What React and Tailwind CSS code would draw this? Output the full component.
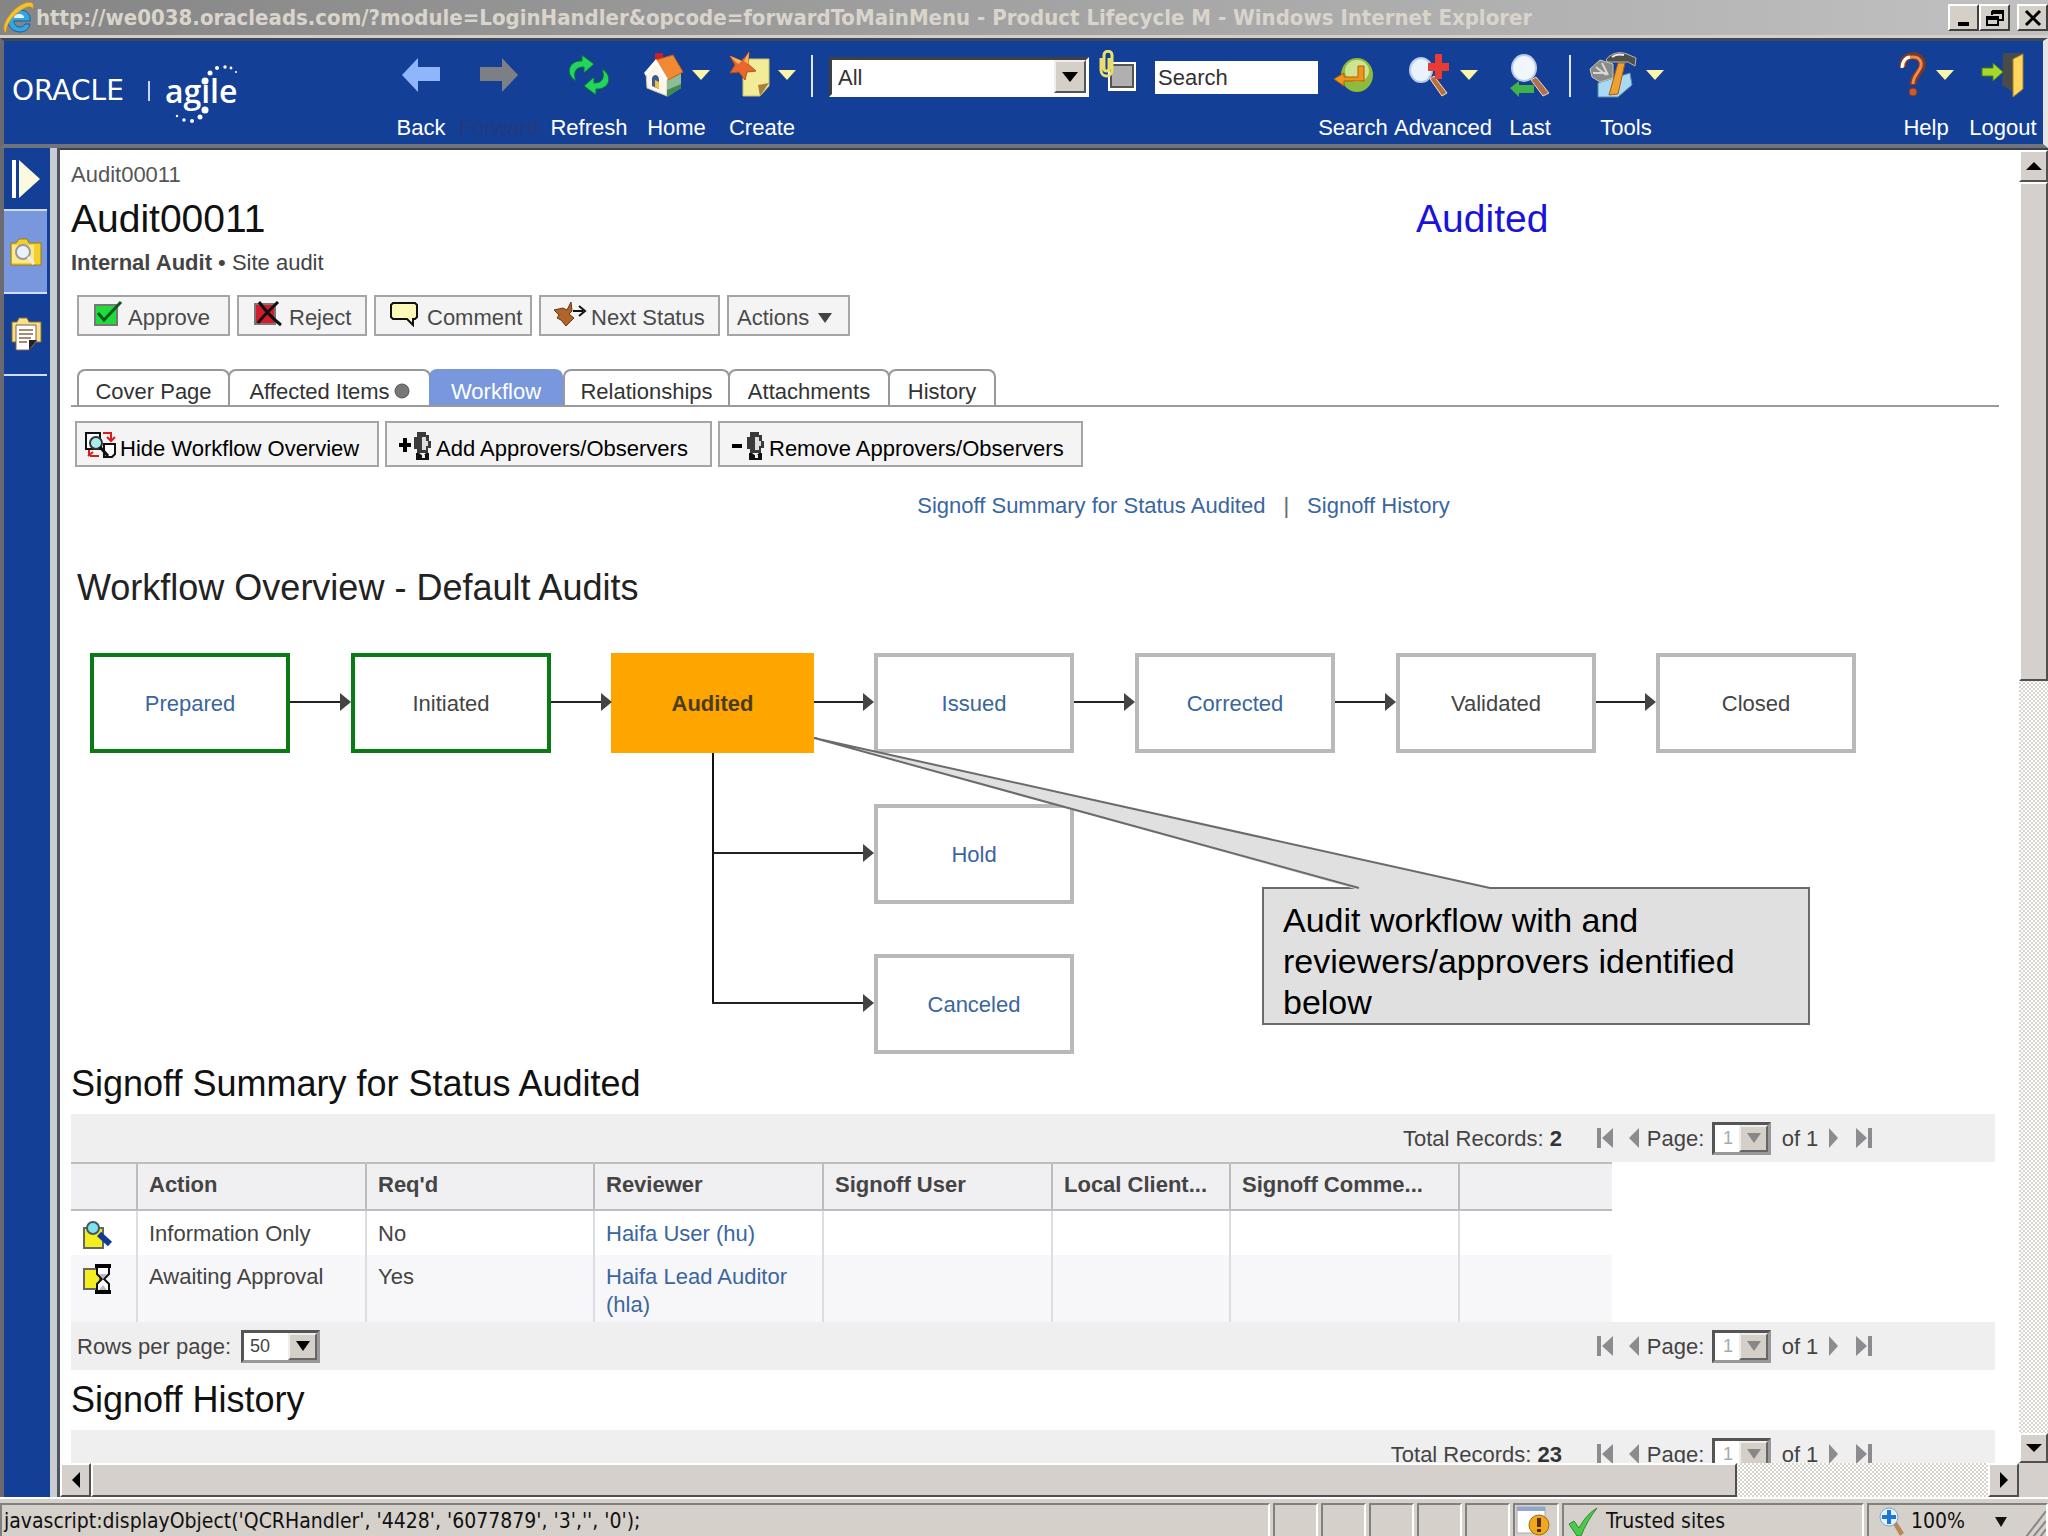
const FONT = "font-['Liberation_Sans',Arial,sans-serif]";
const TAHOMA = "font-['DejaVu_Sans_Condensed','Noto_Sans',sans-serif]";

function Svg({ w, h, children, className = "" }) {
  return (
    <svg width={w} height={h} viewBox={`0 0 ${w} ${h}`} aria-hidden="true" className={`shrink-0 ${className}`}>
      {children}
    </svg>
  );
}

/* ---------- icons ---------- */

const IeIcon = () => (
  <Svg w={36} h={36}>
    <path d="M30 21H14c0 4 3 6 6 6 2 0 4-1 5-3h5c-1 5-5 8-10 8-7 0-12-5-12-11S13 10 20 10s11 5 10 11z" fill="#35a6e0" stroke="#0f5fa0" strokeWidth="1" />
    <path d="M14 18h10c0-3-2-4-5-4s-5 1-5 4z" fill="#dff3fb" />
    <path d="M6 33C1 30 5 19 13 11S31 0 33 4c1 2 0 4-1 6 1-5-5-4-12 1S6 24 6 33z" fill="#f2c230" stroke="#b98a10" strokeWidth=".6" />
  </Svg>
);

const ArrowIcon = ({ fill, flip }) => (
  <Svg w={38} h={36}>
    <path transform={flip ? "matrix(-1 0 0 1 38 0)" : undefined} d="M0 18 16 1v9h22v14H16v11z" fill={fill} />
  </Svg>
);

const RefreshIcon = () => (
  <Svg w={42} h={40}>
    <path d="M8 26C-4 19 1 5 14 6V0l12 9-10 9v-6c-9 0-11 6-8 14z" fill="#22d65a" stroke="#0b6b3c" strokeWidth="1" />
    <path d="M34 14c12 7 7 21-6 20v6l-12-9 10-9v6c9 0 11-6 8-14z" fill="#22d65a" stroke="#0b6b3c" strokeWidth="1" />
  </Svg>
);

const HomeIcon = () => (
  <Svg w={40} h={46}>
    <path d="M11 1h8v10h-8z" fill="#c8202a" />
    <path d="M2 20 12 9l11 16v19L3 36z" fill="#fbf6ea" stroke="#cfc7b8" />
    <path d="M23 27 37 20v16L23 45z" fill="#8dbd94" />
    <path d="m23 38 14-6v4L23 45z" fill="#3f8a4c" />
    <path d="M12 8 29 3l10 17-15 8z" fill="#f28a33" stroke="#c75a12" />
    <path d="m12 7 12 20-3 2L11 12 2 24l-2-3z" fill="#fff" />
    <path d="M8 34v-8c2-5 7-3 7 2v9z" fill="#3e5b8c" />
    <path d="M11 35v-7l4 2v7z" fill="#f0c040" />
  </Svg>
);

const CreateIcon = () => (
  <Svg w={42} h={46}>
    <path d="M15 7h26v27l-9 10H15z" fill="#f3ec96" stroke="#c9c068" />
    <path d="M41 31 30 33l2 11z" fill="#a8803c" />
    <path d="m2 4 12 5 7-9-1 12 8 7-9 1-2 8-6-8-9 1 5-8z" fill="#e8672c" stroke="#b8530f" />
    <path d="m2 4 12 5-4 3zM21 0l-1 12-4-3z" fill="#f7b45c" />
  </Svg>
);

const Caret = ({ color = "#fbf6a8", w = 18 }) => (
  <Svg w={w} h={10}>
    <path d={`M0 0h${w}l-${w / 2} 10z`} fill={color} />
  </Svg>
);

const ClipIcon = () => (
  <Svg w={40} h={42}>
    <rect x="10" y="12" width="28" height="29" fill="#fff" />
    <rect x="13" y="15" width="22" height="22" fill="#b0b0b0" stroke="#555" strokeWidth="2" />
    <path d="M3 8v12c0 8 11 8 11 0V5c0-5-8-5-8 0v13c0 4 5 4 5 0V8" fill="none" stroke="#e9df6a" strokeWidth="3" />
  </Svg>
);

const GoIcon = () => (
  <Svg w={42} h={36}>
    <ellipse cx="25" cy="18" rx="16" ry="17" fill="#8fbb3c" />
    <ellipse cx="25" cy="14" rx="12" ry="11" fill="#cfe493" />
    <path d="M26 9h6v15H12v5L2 22l10-6v4h14z" fill="#ee961c" stroke="#b05f05" />
  </Svg>
);

const AdvancedIcon = () => (
  <Svg w={44} h={44}>
    <path d="m22 26 4-3 13 17-5 3z" fill="#b8703c" stroke="#fbe0c0" strokeWidth="1" />
    <ellipse cx="13" cy="17" rx="11" ry="12" fill="#eaf3fb" stroke="#b5cbe6" strokeWidth="2" />
    <path d="M27 1h7v9h7v8h-7v8h-7v-8h-7v-8h7z" fill="#e63c34" />
  </Svg>
);

const LastIcon = () => (
  <Svg w={44} h={44}>
    <path d="m23 27 5-3 13 16-6 3z" fill="#b0704c" stroke="#f4d8c0" strokeWidth="1" />
    <ellipse cx="16" cy="15" rx="12" ry="13" fill="#f0f6fb" stroke="#b5cbe6" strokeWidth="2" />
    <path d="m2 35 9-7v4h15v8H11v4z" fill="#3fb34a" />
  </Svg>
);

const ToolsIcon = () => (
  <Svg w={50} h={48}>
    <path d="m10 32 32-10 2 12-14 12H10z" fill="#a9daf4" stroke="#5c86a4" />
    <path d="M2 18 12 9l13 4v14l-13 4-8-5z" fill="#8a8a86" stroke="#c8c8c0" />
    <path d="m8 16 10 8M14 12l6 12M5 22h14" stroke="#d8d8d8" strokeWidth="2" />
    <path d="M30 12h7l-7 31-9 1z" fill="#f0a030" stroke="#a4600c" />
    <path d="M18 9c4-7 14-9 21-6l9 4-1 8-7-4H20z" fill="#4c504b" stroke="#b9b9ac" />
    <path d="M24 6c4-3 8-3 12-2" fill="none" stroke="#eee" strokeWidth="2" />
  </Svg>
);

const HelpIcon = () => (
  <Svg w={30} h={46}>
    <path d="M5 15C4 7 9 4 15 4c7 0 10 5 9 10-1 6-9 9-9 19" fill="none" stroke="#84381a" strokeWidth="7" />
    <path d="M5 15C5 8 9 5 15 5c6 0 9 4 8 9-1 6-8 9-8 18" fill="none" stroke="#ee8a54" strokeWidth="3" />
    <path d="M4 16C4 9 8 5 12 5" fill="none" stroke="#fff" strokeWidth="3" />
    <circle cx="15" cy="40" r="4" fill="#c85a2c" stroke="#84381a" />
  </Svg>
);

const LogoutIcon = () => (
  <Svg w={44} h={48}>
    <path d="M22 2h20v34l-10 5-11-7z" fill="#494b49" />
    <path d="M32 8 42 3v35l-10 8z" fill="#ffd75e" stroke="#a4801c" />
    <path d="M1 17h11v-5l10 9-10 9v-5H1z" fill="#a5d82c" stroke="#4f7d10" />
  </Svg>
);

const ApproveIcon = () => (
  <Svg w={30} h={26}>
    <rect x="2" y="4" width="22" height="20" fill="#1fdc3c" stroke="#777" strokeWidth="2" />
    <path d="m5 12 6 7L28 1" fill="none" stroke="#0a5c1c" strokeWidth="3" />
  </Svg>
);
const RejectIcon = () => (
  <Svg w={30} h={26}>
    <rect x="2" y="3" width="20" height="20" fill="#d41c2c" stroke="#777" strokeWidth="2" />
    <path d="M6 1c6 8 14 17 22 23M25 1C18 8 10 15 5 22" fill="none" stroke="#111" strokeWidth="3" />
  </Svg>
);
const CommentIcon = () => (
  <Svg w={30} h={26}>
    <path d="M4 2h22l2 2v12l-2 2h-2v6l-6-6H4l-2-2V4z" fill="#fdf9b8" stroke="#111" strokeWidth="2" />
  </Svg>
);
const NextIcon = () => (
  <Svg w={34} h={26}>
    <path d="m1 9 9-2 4 2 4-8 1 9-3 3 5 4-8 8-5-6-4-2 2-3z" fill="#b0642c" stroke="#6c3410" />
    <path d="M20 10h10M26 5l6 5-6 5" fill="none" stroke="#111" strokeWidth="2" />
  </Svg>
);
const HideIcon = () => (
  <Svg w={34} h={28}>
    <path d="M3 2h14v16H3zM21 13h11v10l-3 3h-8z" fill="#fff" stroke="#111" strokeWidth="2" />
    <circle cx="13" cy="12" r="6" fill="#a8eef0" stroke="#333" strokeWidth="2" />
    <path d="m17 16 8 9" stroke="#111" strokeWidth="3" />
    <path d="M20 2h8v7M24 6l4 4 4-4M16 25H7M10 21l-5 4M6 19v6" fill="none" stroke="#d81c1c" strokeWidth="2" />
  </Svg>
);
const PersonIcon = ({ sign }) => (
  <Svg w={34} h={30}>
    {sign === "+" ? <path d="M1 12h4V7h4v5h4v4H9v5H5v-5H1z" fill="#000" /> : <path d="M1 13h10v4H1z" fill="#000" />}
    <path d="M19 1h9v3h3v6h2v7h-3v5H19v-4h-3V6h3z" fill="#3a3a3a" />
    <path d="M24 6h4v4h2v5h-2v4h-4z" fill="#ddd" />
    <path d="M18 22h3l4 3 3-3h3v7H18z" fill="#111" />
    <path d="M24 24h3v3h-3z" fill="#eee" />
  </Svg>
);

const FolderSearchIcon = () => (
  <Svg w={32} h={30}>
    <path d="M1 6h5l3-4h8l2 4h12v22H1z" fill="#f4cf2c" stroke="#a07c08" />
    <path d="M2 8h22v18H2z" fill="#fbe98c" />
    <circle cx="13" cy="15" r="7" fill="#e8f2f8" stroke="#999" strokeWidth="2" />
    <path d="m18 20 6 7" stroke="#eee" strokeWidth="3" />
  </Svg>
);
const NotesIcon = () => (
  <Svg w={32} h={34}>
    <path d="M2 5h5l2-4h8l2 4h12v20H2z" fill="#f6e08c" stroke="#94701c" />
    <path d="M6 8h20v17l-7 8H6z" fill="#fff" stroke="#84603c" />
    <path d="M9 13h14M9 17h14M9 21h12M9 25h8" stroke="#a88a70" strokeWidth="2" />
    <path d="M27 23h-8v10z" fill="#222" />
  </Svg>
);
const InfoRowIcon = () => (
  <Svg w={32} h={30}>
    <path d="M2 8h19v20H2z" fill="#f4ee20" stroke="#666" strokeWidth="2" />
    <path d="m17 14 11 10" stroke="#123a94" strokeWidth="6" />
    <circle cx="11" cy="8" r="6" fill="#7fe4ea" stroke="#456" strokeWidth="2" />
  </Svg>
);
const WaitRowIcon = () => (
  <Svg w={32} h={32}>
    <path d="M2 6h16v20H2z" fill="#f4ee20" stroke="#666" strokeWidth="2" />
    <path d="M15 4v7l5 5-5 5v7h12v-7l-5-5 5-5V4z" fill="#fff" stroke="#111" strokeWidth="2" />
    <path d="M17 11h8l-4 5zM17 27l4-5 4 5z" fill="#bbb" />
    <path d="M13 1h16v4H13zM13 27h16v4H13z" fill="#000" />
  </Svg>
);

/* ---------- toolbar ---------- */

function ToolButton({ label, icon, caret, className = "", labelClass = "text-white" }) {
  return (
    <button type="button" className={`flex flex-col items-center ${className}`}>
      <span className="flex h-[72px] items-center gap-2 pb-1">
        {icon}
        {caret && <Caret />}
      </span>
      <span className={`text-[22px] leading-[32px] ${labelClass}`}>{label}</span>
    </button>
  );
}

const Separator = () => <div className="mt-[14px] h-[42px] w-[2px] bg-[#dfe6f6]" />;

function WinButton({ label, children }) {
  return (
    <button type="button" aria-label={label} className="flex h-[27px] w-[31px] items-center justify-center border-2 border-t-white border-l-white border-r-[#404040] border-b-[#404040] bg-[#d4d0c8]">
      {children}
    </button>
  );
}

function TitleBar() {
  return (
    <div className="flex h-[38px] shrink-0 items-center border-b-[3px] border-[#d4d0c8] bg-linear-to-r from-[#858585] to-[#c2c1c1]">
      <div className="flex min-w-0 flex-1 items-center">
        <IeIcon />
        <h1 className={`truncate text-[22px] leading-[34px] font-bold text-[#d9d5cc] ${TAHOMA}`}>
          http://we0038.oracleads.com/?module=LoginHandler&amp;opcode=forwardToMainMenu - Product Lifecycle M - Windows Internet Explorer
        </h1>
      </div>
      <div className="flex">
        <WinButton label="Minimize"><Svg w={20} h={18}><path d="M4 13h11v4H4z" /></Svg></WinButton>
        <WinButton label="Restore">
          <Svg w={20} h={20}><path d="M7 3h11v9h-4M7 3v4M7 5h11M2 9h11v8H2zM2 11h11" fill="none" stroke="#000" strokeWidth="2" /></Svg>
        </WinButton>
        <div className="w-[7px]" />
        <WinButton label="Close"><Svg w={20} h={18}><path d="m3 2 14 14M17 2 3 16" stroke="#000" strokeWidth="3" /></Svg></WinButton>
      </div>
    </div>
  );
}

function Logo() {
  return (
    <div className="flex w-[386px] items-center pb-1 pl-2 text-white">
      <span className="font-['DejaVu_Sans',sans-serif] text-[28px] leading-[40px]">ORACLE</span>
      <span className="ml-[24px] h-[20px] w-[2px] bg-[#c8d4f0]" />
      <span className="relative ml-[15px] font-['Open_Sans',sans-serif] text-[32px] leading-[60px] font-semibold">
        agile
        <svg width="78" height="88" viewBox="0 0 78 88" className="absolute -top-[14px] left-0" aria-hidden="true">
          <g fill="#fff">
            <circle cx="40" cy="34" r="3.5" />
            <circle cx="45" cy="26" r="2.5" />
            <circle cx="52" cy="21" r="2" />
            <circle cx="60" cy="20" r="1.7" />
            <circle cx="66" cy="21" r="1.4" />
            <circle cx="71" cy="25" r="1.1" />
            <circle cx="40" cy="63" r="3.5" />
            <circle cx="35" cy="70" r="2.5" />
            <circle cx="27" cy="74" r="2" />
            <circle cx="19" cy="73" r="1.7" />
            <circle cx="12" cy="69" r="1.2" />
          </g>
        </svg>
      </span>
    </div>
  );
}

function Header() {
  return (
    <header className="flex h-[110px] shrink-0 border-t-[3px] border-r-[5px] border-b-4 border-l-4 border-t-[#404858] border-r-[#e8e6e2] border-b-[#6f747c] border-l-[#6a6a70] bg-[#143f97]">
      <Logo />
      <ToolButton className="-ml-1 w-[70px]" label="Back" icon={<ArrowIcon fill="#8fb6fa" />} />
      <ToolButton className="w-[86px]" label="Forward" labelClass="text-[#24397a]" icon={<ArrowIcon fill="#7d7f86" flip />} />
      <ToolButton className="w-[94px]" label="Refresh" icon={<RefreshIcon />} />
      <ToolButton className="w-[81px]" label="Home" icon={<HomeIcon />} caret />
      <ToolButton className="w-[90px]" label="Create" icon={<CreateIcon />} caret />
      <div className="ml-[4px]"><Separator /></div>
      <div className="relative mt-[16px] ml-[16px] h-[40px] w-[260px] border-[3px] border-t-[#404040] border-r-white border-b-white border-l-[#404040] bg-white">
        <select aria-label="Search scope" className="h-full w-full appearance-none bg-white pl-[6px] text-[22px] text-[#333]" defaultValue="All">
          <option>All</option>
        </select>
        <span className="pointer-events-none absolute top-0 right-0 flex h-[33px] w-[32px] items-center justify-center border-2 border-t-[#eee] border-r-[#555] border-b-[#555] border-l-[#eee] bg-[#d4d0c8]">
          <Caret color="#000" w={16} />
        </span>
      </div>
      <div className="mt-[9px] ml-[9px]"><ClipIcon /></div>
      <input type="text" aria-label="Search text" defaultValue="Search" className="mt-[20px] ml-[17px] h-[33px] w-[163px] bg-white px-[3px] text-[22px] text-[#333]" />
      <ToolButton className="w-[70px]" label="Search" icon={<GoIcon />} />
      <ToolButton className="w-[110px]" label="Advanced" icon={<AdvancedIcon />} caret />
      <ToolButton className="w-[64px]" label="Last" icon={<LastIcon />} />
      <div className="ml-[7px]"><Separator /></div>
      <ToolButton className="ml-[14px] w-[82px]" label="Tools" icon={<ToolsIcon />} caret />
      <div className="flex-1" />
      <ToolButton className="w-[74px]" label="Help" icon={<HelpIcon />} caret />
      <ToolButton className="w-[80px]" label="Logout" icon={<LogoutIcon />} />
    </header>
  );
}

function Sidebar() {
  return (
    <nav aria-label="Side panel" className="flex w-[60px] shrink-0 flex-col border-r-[3px] border-l-4 border-r-[#50545c] border-l-[#6a6a70] bg-[#143f97]">
      <div className="flex flex-1 flex-col border-r-[7px] border-[#c9ccd2] pr-[3px]">
        <button type="button" aria-label="Expand panel" className="flex h-[61px] items-center justify-center">
          <Svg w={30} h={40}><path d="M1 1h4v38H1z" fill="#fff" /><path d="M8 1v38l21-19z" fill="#fbfae0" /></Svg>
        </button>
        <button type="button" aria-label="Search folders" className="flex h-[85px] items-center justify-center border-y-2 border-[#cfdcf4] bg-[#7897dc]">
          <FolderSearchIcon />
        </button>
        <button type="button" aria-label="Reports" className="flex h-[82px] items-center justify-center border-b-2 border-[#cfdcf4]">
          <NotesIcon />
        </button>
      </div>
    </nav>
  );
}

/* ---------- page pieces ---------- */

function ActionButton({ icon, children, className = "", size = "h-[41px] text-[#4a4a4a]" }) {
  return (
    <button type="button" className={`flex items-center border-2 border-[#a5a5a8] bg-[#f4f4f5] text-[22px] ${size} ${className}`}>
      {icon && <span className="self-start pt-1">{icon}</span>}
      <span className="flex items-center gap-[9px] pt-1">{children}</span>
    </button>
  );
}

const TALL = "h-[46px] pt-1 text-black";

function Tab({ children, className = "", active }) {
  return (
    <button
      type="button"
      role="tab"
      aria-selected={!!active}
      className={`flex h-[36px] items-center justify-center gap-1 rounded-t-lg border-2 border-b-0 pt-[6px] text-[22px] ${active ? "border-[#7897dc] bg-[#7897dc] text-white" : "-mr-[2px] border-[#98989c] bg-white text-[#333]"} ${className}`}
    >
      {children}
    </button>
  );
}

const NODES = [
  { label: "Prepared", pos: "left-0 top-0", kind: "done", link: true },
  { label: "Initiated", pos: "left-[261px] top-0", kind: "done" },
  { label: "Audited", pos: "left-[521px] top-0", kind: "current" },
  { label: "Issued", pos: "left-[784px] top-0", kind: "todo", link: true },
  { label: "Corrected", pos: "left-[1045px] top-0", kind: "todo", link: true },
  { label: "Validated", pos: "left-[1306px] top-0", kind: "todo" },
  { label: "Closed", pos: "left-[1566px] top-0", kind: "todo" },
  { label: "Hold", pos: "left-[784px] top-[151px]", kind: "todo", link: true },
  { label: "Canceled", pos: "left-[784px] top-[301px]", kind: "todo", link: true },
];
const KINDS = {
  done: "w-[200px] border-4 border-[#0a7a14] bg-white text-[#444]",
  current: "w-[203px] bg-[#ffa500] font-bold text-[#4a3c1c]",
  todo: "w-[200px] border-4 border-[#b9b8ba] bg-white text-[#444]",
};

function Arrow({ x1, x2, y }) {
  return (
    <g>
      <path d={`M${x1} ${y}H${x2 - 8}`} stroke="#222" strokeWidth="2" />
      <path d={`M${x2 - 11} ${y - 9}l11 9-11 9z`} fill="#444" />
    </g>
  );
}

function WorkflowDiagram() {
  return (
    <div className="relative mt-[43px] ml-[19px] h-[402px]">
      {NODES.map((n) => (
        <div key={n.label} className={`absolute flex h-[100px] items-center justify-center text-[22px] ${n.pos} ${KINDS[n.kind]}`}>
          {n.link ? <a href="#status" className="text-[#3a66a0]">{n.label}</a> : n.label}
        </div>
      ))}
      <svg width="1780" height="402" viewBox="0 0 1780 402" className="pointer-events-none absolute top-0 left-0" aria-hidden="true">
        <Arrow x1={200} x2={261} y={49} />
        <Arrow x1={461} x2={522} y={49} />
        <Arrow x1={724} x2={784} y={49} />
        <Arrow x1={984} x2={1045} y={49} />
        <Arrow x1={1245} x2={1306} y={49} />
        <Arrow x1={1506} x2={1566} y={49} />
        <path d="M623 100V350" stroke="#111" strokeWidth="2" />
        <Arrow x1={623} x2={784} y={200} />
        <Arrow x1={622} x2={784} y={350} />
      </svg>
      <div className="absolute top-[234px] left-[1172px] z-10 h-[138px] w-[548px] border-2 border-[#6a6c6a] bg-[#e0e0e0] py-[11px] pl-[19px] text-[34px] leading-[41px] text-black">
        <p>
          Audit workflow with and
          <br />
          reviewers/approvers identified
          <br />
          below
        </p>
      </div>
      <svg width="700" height="154" viewBox="0 0 700 154" className="pointer-events-none absolute top-[84px] left-[724px] z-20" aria-hidden="true">
        <path d="M545 153 0 1 676 151v2z" fill="#e0e0e0" />
        <path d="M545 151 0 1 676 151" fill="none" stroke="#6a6c6a" strokeWidth="2" />
      </svg>
    </div>
  );
}

function MiniSelect({ label, value, disabled, className }) {
  return (
    <span className={`relative h-[33px] border-[3px] border-t-[#555] border-r-[#999] border-b-[#999] border-l-[#555] bg-white ${className}`}>
      <select aria-label={label} disabled={disabled} defaultValue={value} className={`block h-full w-full appearance-none bg-white text-[18px] opacity-100 ${disabled ? "pl-2 text-[#aaa]" : "pl-[6px] text-[#444]"}`}>
        <option>{value}</option>
      </select>
      <span className="pointer-events-none absolute top-0 right-0 flex h-[27px] w-[29px] items-center justify-center border-2 border-t-[#eee] border-r-[#666] border-b-[#666] border-l-[#eee] bg-[#d4d0c8]">
        <Caret color={disabled ? "#888" : "#000"} w={14} />
      </span>
    </span>
  );
}

function PagerButton({ label, d, w }) {
  return (
    <button type="button" aria-label={label}>
      <Svg w={w} h={20}><path d={d} fill="#8c8c90" /></Svg>
    </button>
  );
}

function Band({ total, rows }) {
  return (
    <div className="mr-[24px] flex h-[48px] items-center bg-[#f0eff0] pr-[123px] text-[22px] text-[#444]">
      {rows && (
        <label className="flex items-center gap-[10px] pl-[6px]">
          Rows per page:
          <MiniSelect label="Rows per page" value="50" className="w-[79px]" />
        </label>
      )}
      <div className="flex-1" />
      {total && <span>Total Records: <b className="font-bold text-[#333]">{total}</b></span>}
      <div className="flex w-[310px] items-center justify-end">
        <PagerButton label="First page" w={16} d="M0 0h4v20H0zM16 0v20L5 10z" />
        <span className="w-[16px]" />
        <PagerButton label="Previous page" w={10} d="M10 0v20L0 10z" />
        <span className="w-[73px] text-center">Page:</span>
        <MiniSelect label="Page" value="1" disabled className="w-[59px]" />
        <span className="w-[58px] text-center">of 1</span>
        <PagerButton label="Next page" w={9} d="M0 0v20l9-10z" />
        <span className="w-[18px]" />
        <PagerButton label="Last page" w={16} d="M12 0h4v20h-4zM0 0v20l11-10z" />
      </div>
    </div>
  );
}

const COLUMNS = [
  ["", "w-[66px]"],
  ["Action", "w-[229px]"],
  ["Req'd", "w-[228px]"],
  ["Reviewer", "w-[229px]"],
  ["Signoff User", "w-[229px]"],
  ["Local Client...", "w-[178px]"],
  ["Signoff Comme...", "w-[229px]"],
  [" ", "w-[153px]"],
];
const ROWS = [
  { icon: <InfoRowIcon />, action: "Information Only", req: "No", who: "Haifa User (hu)", cls: "h-[45px] bg-white", pad: "pt-[9px]" },
  { icon: <WaitRowIcon />, action: "Awaiting Approval", req: "Yes", who: "Haifa Lead Auditor (hla)", cls: "h-[67px] bg-[#f7f6f8]", pad: "pt-[8px]" },
];

function SignoffTable() {
  return (
    <table className="w-[1541px] table-fixed border-collapse text-left text-[22px] leading-[28px] text-[#444]">
      <thead>
        <tr className="h-[47px] border-y-2 border-[#bdbcbf] bg-[#f0eff1]">
          {COLUMNS.map(([name, w]) => (
            <th key={name} className={`border-r-2 border-[#bdbcbf] pb-[3px] pl-[11px] font-bold whitespace-nowrap last:border-r-0 ${w}`}>{name}</th>
          ))}
        </tr>
      </thead>
      <tbody>
        {ROWS.map((r) => {
          const td = `border-r-2 border-[#dddce0] pl-[11px] align-top ${r.pad}`;
          return (
            <tr key={r.action} className={r.cls}>
              <td className={td}>{r.icon}</td>
              <td className={td}>{r.action}</td>
              <td className={td}>{r.req}</td>
              <td className={td}><a href="#reviewer" className="text-[#3a66a0]">{r.who}</a></td>
              <td className={td} />
              <td className={td} />
              <td className={td} />
              <td />
            </tr>
          );
        })}
      </tbody>
    </table>
  );
}

/* ---------- scroll bars and status bar ---------- */

const RAISED = "border-2 border-t-white border-l-white border-r-[#505050] border-b-[#505050] bg-[#d6d0cc]";
const DITHER = "bg-[repeating-conic-gradient(#ffffff_0_25%,#d8d4ce_0_50%)] bg-[length:4px_4px]";

function ScrollButton({ label, d, className }) {
  return (
    <button type="button" aria-label={label} className={`flex shrink-0 items-center justify-center ${RAISED} ${className}`}>
      <Svg w={18} h={18}><path d={d} /></Svg>
    </button>
  );
}

function VScroll() {
  return (
    <div className={`flex w-[29px] shrink-0 flex-col ${DITHER}`}>
      <ScrollButton label="Scroll up" d="M1 13h16L9 5z" className="h-[32px]" />
      <div className={`h-[38%] ${RAISED}`} />
      <div className="flex-1" />
      <ScrollButton label="Scroll down" d="M1 5h16l-8 8z" className="h-[30px]" />
    </div>
  );
}

function HScroll() {
  return (
    <div className="flex h-[34px] shrink-0">
      <div className={`flex flex-1 ${DITHER}`}>
        <ScrollButton label="Scroll left" d="M13 1v16L5 9z" className="w-[31px]" />
        <div className={`w-[84%] ${RAISED}`} />
        <div className="flex-1" />
        <ScrollButton label="Scroll right" d="M5 1v16l8-8z" className="w-[31px]" />
      </div>
      <div className="w-[29px] bg-[#d6d0cc]" />
    </div>
  );
}

function Cell({ className = "", children }) {
  return (
    <div className={`flex h-[33px] items-center border-2 border-b-0 border-t-[#808080] border-r-white border-l-[#808080] ${className}`}>{children}</div>
  );
}

function StatusBar() {
  return (
    <footer className={`flex h-[39px] shrink-0 items-end gap-[3px] border-t-2 border-white bg-[#d6d0cb] text-[21px] whitespace-nowrap text-[#111] ${TAHOMA}`}>
      <Cell className="flex-1 pt-[2px] pl-[2px]">javascript:displayObject('QCRHandler', '4428', '6077879', '3','', '0');</Cell>
      <Cell className="w-[45px]" />
      <Cell className="w-[45px]" />
      <Cell className="w-[45px]" />
      <Cell className="w-[45px]" />
      <Cell className="w-[45px]" />
      <Cell className="w-[46px]">
        <Svg w={36} h={31}>
          <path d="M2 2h28v26H2z" fill="#fff" stroke="#aaa" />
          <path d="M2 2h28v4H2z" fill="#8fa6d0" />
          <circle cx="24" cy="20" r="10" fill="#f0a81c" stroke="#a06c0c" />
          <path d="M22 13h4v9h-4zM22 24h4v3h-4z" fill="#5c2c08" />
        </Svg>
      </Cell>
      <Cell className="w-[302px] gap-[8px] pt-[2px] pl-[4px]">
        <Svg w={30} h={30}><path d="m1 17 5-3 5 7C16 12 21 6 29 1 22 10 17 19 13 29H9z" fill="#4cc84a" stroke="#2c8c34" /></Svg>
        Trusted sites
      </Cell>
      <Cell className="w-[181px] gap-1 pt-[2px] pl-[10px]">
        <Svg w={28} h={32}>
          <path d="m14 18 4-2 7 11-4 3z" fill="#b88858" />
          <circle cx="10" cy="11" r="9" fill="#e4f0fa" stroke="#7fa4cc" />
          <path d="M8 4h4v5h5v4h-5v5H8v-5H3V9h5z" fill="#1f74d8" />
        </Svg>
        <span className="w-[80px]">100%</span>
        <Caret color="#111" w={12} />
        <div className="flex-1" />
        <Svg w={22} h={31}><path d="M2 31 22 5M9 31l13-16M16 31l6-8" stroke="#888" strokeWidth="2" /></Svg>
      </Cell>
    </footer>
  );
}

export default function App() {
  return (
    <div className={`flex h-screen flex-col overflow-hidden bg-[#d6d0cb] ${FONT}`}>
      <TitleBar />
      <Header />
      <div className="flex min-h-0 flex-1">
        <Sidebar />
        <div className="flex min-w-0 flex-1 flex-col">
          <div className="flex min-h-0 flex-1 border-t-2 border-[#404448] bg-white">
            <main className="min-w-0 flex-1 overflow-hidden pt-[9px] pl-[11px]">
              <p className="text-[22px] leading-[32px] text-[#555]">Audit00011</p>
              <div className="mt-[6px] flex text-[39px] leading-[44px]">
                <h2 className="w-[71%] text-[#111]">Audit00011</h2>
                <span className="-ml-[38px] text-[#1a12dc]">Audited</span>
              </div>
              <p className="mt-[6px] text-[22px] leading-[32px] text-[#444]">
                <b>Internal Audit</b> • Site audit
              </p>
              <div className="mt-4 ml-[6px] flex gap-[7px]">
                <ActionButton className="w-[153px] gap-[5px] pl-[14px]" icon={<ApproveIcon />}>Approve</ActionButton>
                <ActionButton className="w-[130px] gap-[6px] pl-[14px]" icon={<RejectIcon />}>Reject</ActionButton>
                <ActionButton className="w-[158px] gap-[8px] pl-[13px]" icon={<CommentIcon />}>Comment</ActionButton>
                <ActionButton className="w-[181px] gap-[4px] pl-[12px]" icon={<NextIcon />}>Next Status</ActionButton>
                <ActionButton className="w-[123px] pl-[8px]">Actions <Caret color="#444" w={14} /></ActionButton>
              </div>
              <div role="tablist" className="mt-[33px] mr-[20px] flex border-b-2 border-[#9a9a9e] pl-[6px]">
                <Tab className="w-[153px]">Cover Page</Tab>
                <Tab className="w-[203px]">
                  Affected Items
                  <Svg w={16} h={16}><circle cx="8" cy="8" r="7" fill="#777" stroke="#555" /></Svg>
                </Tab>
                <Tab className="w-[134px]" active>Workflow</Tab>
                <Tab className="w-[167px]">Relationships</Tab>
                <Tab className="w-[162px]">Attachments</Tab>
                <Tab className="w-[108px]">History</Tab>
              </div>
              <div className="mt-[14px] ml-[4px] flex gap-[6px]">
                <ActionButton size={TALL} className="w-[304px] gap-[3px] pl-[6px]" icon={<HideIcon />}>Hide Workflow Overview</ActionButton>
                <ActionButton size={TALL} className="w-[327px] gap-[4px] pl-[11px]" icon={<PersonIcon sign="+" />}>Add Approvers/Observers</ActionButton>
                <ActionButton size={TALL} className="w-[365px] gap-[4px] pl-[11px]" icon={<PersonIcon sign="-" />}>Remove Approvers/Observers</ActionButton>
              </div>
              <div className="mt-[23px] mr-[82px] flex justify-center gap-[18px] pl-[359px] text-[22px] leading-[32px] text-[#3a66a0]">
                <a href="#summary">Signoff Summary for Status Audited</a>
                <span className="text-[#666]">|</span>
                <a href="#history">Signoff History</a>
              </div>
              <h3 className="mt-[44px] ml-[6px] text-[36px] leading-[44px] text-[#222]">Workflow Overview - Default Audits</h3>
              <WorkflowDiagram />
              <h3 className="mt-[7px] text-[36px] leading-[44px] text-[#111]">Signoff Summary for Status Audited</h3>
              <div className="mt-[8px]">
                <Band total="2" />
                <SignoffTable />
                <Band rows />
              </div>
              <h3 className="mt-[8px] text-[36px] leading-[44px] text-[#111]">Signoff History</h3>
              <div className="mt-[8px]">
                <Band total="23" />
              </div>
            </main>
            <VScroll />
          </div>
          <HScroll />
        </div>
      </div>
      <StatusBar />
    </div>
  );
}
